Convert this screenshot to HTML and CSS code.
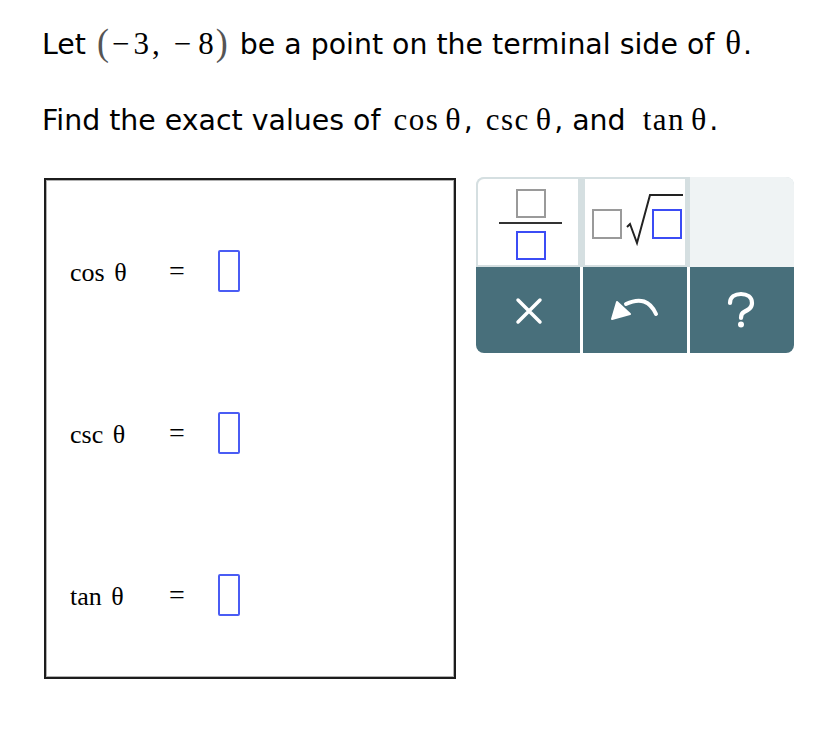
FILE: index.html
```html
<!DOCTYPE html>
<html>
<head>
<meta charset="utf-8">
<link rel="stylesheet" href="styles.css">
</head>
<body>
<div class="page">
  <p class="q">Let <span class="m"><span class="paren lp">(</span><span class="neg">−</span><span class="d1">3</span><span class="cm">,</span><span class="neg n2">−</span><span class="d2">8</span><span class="paren rp">)</span></span> be a point on the terminal side of <span class="m th1">θ</span>.</p>
  <p class="q">Find the exact values of <span class="m fn">cos<span class="th">θ</span></span>, <span class="m fn">csc<span class="th">θ</span></span>, and <span class="m fn tn">tan<span class="th">θ</span></span>.</p>
  <div class="work">
    <div class="answers">
      <div class="row">
        <span class="label">cos θ</span>
        <span class="eq">=</span>
        <span class="input"></span>
      </div>
      <div class="row">
        <span class="label">csc θ</span>
        <span class="eq">=</span>
        <span class="input"></span>
      </div>
      <div class="row">
        <span class="label">tan θ</span>
        <span class="eq">=</span>
        <span class="input"></span>
      </div>
    </div>
    <div class="palette">
      <div class="prow top">
        <div class="cell light first">
          <svg width="100" height="86" viewBox="0 0 100 86">
            <rect x="39" y="11" width="28" height="27" fill="none" stroke="#9a9a9a" stroke-width="2"/>
            <line x1="21" y1="44" x2="84" y2="44" stroke="#333" stroke-width="2"/>
            <rect x="39" y="53" width="28" height="27" fill="none" stroke="#3b4cf5" stroke-width="2"/>
          </svg>
        </div>
        <div class="cell light">
          <svg width="100" height="86" viewBox="0 0 100 86">
            <rect x="8" y="31" width="28" height="28" fill="none" stroke="#9a9a9a" stroke-width="2"/>
            <polyline points="42,48 45,45 52,64 65,16 98,16" fill="none" stroke="#222" stroke-width="2" stroke-linejoin="miter"/>
            <rect x="68" y="31" width="28" height="28" fill="none" stroke="#3b4cf5" stroke-width="2"/>
          </svg>
        </div>
        <div class="cell empty"></div>
      </div>
      <div class="prow bottom">
        <div class="cell dark">
          <svg width="104" height="86" viewBox="0 0 104 86">
            <path d="M42 33 L64 55 M64 33 L42 55" stroke="#fff" stroke-width="3.5" stroke-linecap="round"/>
          </svg>
        </div>
        <div class="cell dark">
          <svg width="104" height="86" viewBox="0 0 104 86">
            <path d="M73 47 Q64 27 43 37" fill="none" stroke="#fff" stroke-width="4" stroke-linecap="round"/>
            <path d="M29 52 L34 35 L47 47 Z" fill="#fff" stroke="#fff" stroke-width="2" stroke-linejoin="round"/>
          </svg>
        </div>
        <div class="cell dark">
          <svg width="104" height="86" viewBox="0 0 104 86">
            <path d="M40 36 C40 30 45 27 51 27 C57 27 62 30 62 36 C62 41 58 43 54 45 C52 46 51 48 51 51" fill="none" stroke="#fff" stroke-width="4.2" stroke-linecap="round" stroke-linejoin="round"/>
            <circle cx="51" cy="57.5" r="3" fill="#fff"/>
          </svg>
        </div>
      </div>
    </div>
  </div>
</div>
</body>
</html>
```

FILE: styles.css
```css
html, body {
  margin: 0;
  padding: 0;
  background: #fff;
}

.page {
  padding: 25px 0 0 42px;
  color: #000;
}

.q {
  margin: 0 0 36px 0;
  font-family: "DejaVu Sans", Verdana, sans-serif;
  font-size: 28.4px;
  line-height: 40px;
  white-space: nowrap;
}

.m {
  font-family: "Liberation Serif", "Times New Roman", serif;
  font-size: 31px;
  line-height: 0;
}

.th1 {
  font-size: 33px;
  margin-left: 2px;
  margin-right: 2px;
}

.fn {
  letter-spacing: 1.5px;
  margin-left: 4px;
}

.fn.tn {
  margin-left: 8px;
}

.th {
  margin-left: 6px;
  margin-right: 3px;
  font-size: 32px;
  letter-spacing: 0;
}

.neg {
  margin: 0 4px 0 3px;
}

.neg.n2 {
  margin-left: 14px;
  margin-right: 7px;
}

.cm {
  margin-left: 3px;
}

.d2 {
  margin-right: 2px;
}

.paren {
  font-size: 36px;
  color: #555;
  line-height: 0;
  display: inline-block;
  transform: scaleY(1.05);
}

.paren.lp {
  margin-left: 2px;
}

.paren.rp {
  margin-right: 3px;
}

.work {
  display: flex;
  align-items: flex-start;
  margin-left: 2px;
}

.answers {
  box-sizing: border-box;
  width: 412px;
  height: 501px;
  margin-top: 1px;
  border: 2px solid #1c1c1c;
  box-shadow: inset 0 0 0 1px #b0b0b0;
  padding: 70px 0 0 24px;
  display: flex;
  flex-direction: column;
  gap: 120px;
}

.row {
  display: flex;
  align-items: center;
  height: 42px;
  font-family: "Liberation Serif", "Times New Roman", serif;
  font-size: 26px;
}

.label {
  width: 99px;
  word-spacing: 3px;
  position: relative;
  top: 2px;
}

.eq {
  width: 49px;
  font-size: 28px;
}

.input {
  box-sizing: border-box;
  width: 22px;
  height: 42px;
  border: 2px solid #4a5cf4;
  border-radius: 2px;
}

.palette {
  width: 318px;
  margin-left: 20px;
  border-radius: 8px;
  overflow: hidden;
}

.prow {
  display: grid;
  grid-template-columns: 104px 104px 104px;
  column-gap: 3px;
}

.prow.top {
  height: 90px;
  background: #d5dfe1;
}

.prow.bottom {
  height: 86px;
  background: #fff;
}

.cell {
  box-sizing: border-box;
  display: flex;
  align-items: center;
  justify-content: center;
}

.cell.light {
  background: #fff;
  border: 2px solid #d5dfe1;
}

.cell.first {
  border-top-left-radius: 8px;
}

.cell.empty {
  background: #eff3f4;
}

.cell.dark {
  background: #486f7b;
}

.cell svg {
  display: block;
}
```
